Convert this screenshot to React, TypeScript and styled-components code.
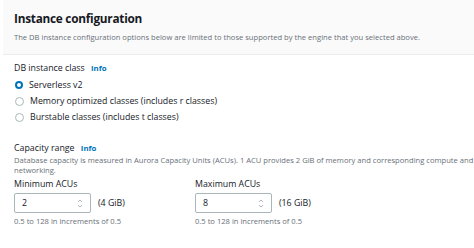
import React from 'react';
import styled, { createGlobalStyle } from 'styled-components';

const GlobalStyle = createGlobalStyle`
  html, body {
    margin: 0;
    padding: 0;
    background: #ffffff;
  }
  body {
    font-family: 'Open Sans', 'Liberation Sans', sans-serif;
    color: #16191f;
  }
`;

const radioOptions = [
  { label: 'Serverless v2', checked: true },
  { label: 'Memory optimized classes (includes r classes)', checked: false },
  { label: 'Burstable classes (includes t classes)', checked: false },
];

const App = () => {
  return (
    <Page>
      <GlobalStyle />
      <Header>
        <Title>Instance configuration</Title>
        <Subtitle>
          The DB instance configuration options below are limited to those supported by the engine that you
          selected above.
        </Subtitle>
      </Header>
      <Body>
        <Field>
          <Label>
            DB instance class <InfoLink>Info</InfoLink>
          </Label>
          <RadioList>
            {radioOptions.map((opt) => (
              <RadioRow key={opt.label}>
                <RadioDot checked={opt.checked} />
                <span>{opt.label}</span>
              </RadioRow>
            ))}
          </RadioList>
        </Field>
        <Field2>
          <Label>
            Capacity range <InfoLink>Info</InfoLink>
          </Label>
          <Description>
            Database capacity is measured in Aurora Capacity Units (ACUs). 1 ACU provides 2 GiB of memory and
            corresponding compute and networking.
          </Description>
          <AcuRow>
            <AcuColumn>
              <SubLabel>Minimum ACUs</SubLabel>
              <InputLine>
                <NumberBox>
                  <span>2</span>
                  <Spinner />
                </NumberBox>
                <Unit>(4 GiB)</Unit>
              </InputLine>
              <Hint>0.5 to 128 in increments of 0.5</Hint>
            </AcuColumn>
            <AcuColumn>
              <SubLabel>Maximum ACUs</SubLabel>
              <InputLine>
                <NumberBox>
                  <span>8</span>
                  <Spinner />
                </NumberBox>
                <Unit>(16 GiB)</Unit>
              </InputLine>
              <Hint>0.5 to 128 in increments of 0.5</Hint>
            </AcuColumn>
          </AcuRow>
        </Field2>
      </Body>
    </Page>
  );
};

const Spinner = () => (
  <SpinIcon viewBox="0 0 10 14" width="8" height="11">
    <path d="M2.5 5 L5 2.5 L7.5 5" fill="none" stroke="#9aa0a6" strokeWidth="1" />
    <path d="M2.5 9 L5 11.5 L7.5 9" fill="none" stroke="#9aa0a6" strokeWidth="1" />
  </SpinIcon>
);

const Page = styled.div`
  width: 474px;
  height: 248px;
  overflow: hidden;
  padding-left: 3px;
  box-sizing: border-box;
`;

const Header = styled.div`
  background: #fafafa;
  border-bottom: 1px solid #eaeded;
  padding: 8px 0 11px 11px;
`;

const Title = styled.h2`
  margin: 0;
  font-size: 11.8px;
  letter-spacing: -0.25px;
  font-weight: 700;
  line-height: 20px;
  color: #16191f;
`;

const Subtitle = styled.div`
  font-size: 7.6px;
  line-height: 12px;
  margin-top: 3px;
  color: #687078;
  white-space: nowrap;
`;

const Body = styled.div`
  padding: 5px 0 0 11px;
`;

const Field = styled.div`
  display: flex;
  flex-direction: column;
`;

const Field2 = styled(Field)`
  margin-top: 15px;
`;

const Label = styled.div`
  font-size: 8.8px;
  line-height: 17px;
  color: #16191f;
`;

const InfoLink = styled.span`
  color: #0073bb;
  font-weight: 700;
  font-size: 7.8px;
  margin-left: 4px;
`;

const RadioList = styled.div`
  display: flex;
  flex-direction: column;
`;

const RadioRow = styled.div`
  display: flex;
  align-items: center;
  gap: 6px;
  height: 16px;
  font-size: 8.8px;
  color: #16191f;
`;

const RadioDot = styled.span<{ checked: boolean }>`
  width: ${({ checked }) => (checked ? '4px' : '7px')};
  height: ${({ checked }) => (checked ? '4px' : '7px')};
  border-radius: 50%;
  margin-left: 1px;
  border: ${({ checked }) => (checked ? '2.5px solid #0073bb' : '1px solid #aab7b8')};
  background: #ffffff;
  flex-shrink: 0;
`;

const Description = styled.div`
  font-size: 7.6px;
  line-height: 10px;
  margin-top: -2px;
  color: #687078;
  width: 468px;
`;

const AcuRow = styled.div`
  display: grid;
  grid-template-columns: 181px 1fr;
  margin-top: 2px;
`;

const AcuColumn = styled.div`
  display: flex;
  flex-direction: column;
`;

const SubLabel = styled.div`
  font-size: 8.8px;
  line-height: 14px;
  color: #16191f;
`;

const InputLine = styled.div`
  display: flex;
  align-items: center;
  gap: 7px;
  margin-top: 2px;
`;

const NumberBox = styled.div`
  width: 77px;
  height: 20px;
  box-sizing: border-box;
  border: 1px solid #aab7b8;
  border-radius: 2px;
  display: flex;
  align-items: center;
  justify-content: space-between;
  padding: 0 6px 0 7px;
  font-size: 8.8px;
  color: #16191f;
`;

const SpinIcon = styled.svg`
  display: block;
`;

const Unit = styled.span`
  font-size: 8.8px;
  color: #16191f;
`;

const Hint = styled.div`
  font-size: 7.6px;
  line-height: 12px;
  margin-top: 2px;
  color: #687078;
`;

export default App;
